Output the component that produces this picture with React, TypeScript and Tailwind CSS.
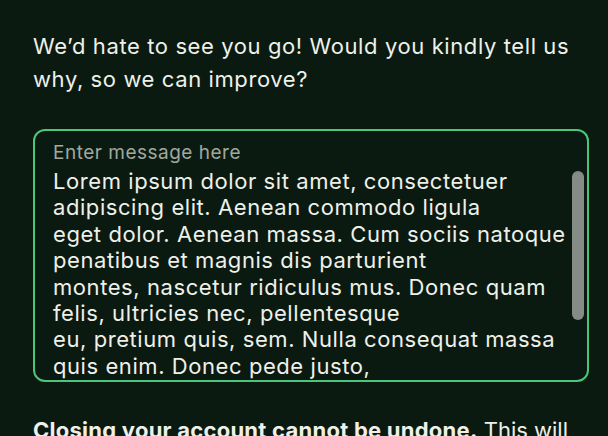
import React from 'react';

const lines = [
  'Lorem ipsum dolor sit amet, consectetuer',
  'adipiscing elit. Aenean commodo ligula',
  'eget dolor. Aenean massa. Cum sociis natoque',
  'penatibus et magnis dis parturient',
  'montes, nascetur ridiculus mus. Donec quam',
  'felis, ultricies nec, pellentesque',
  'eu, pretium quis, sem. Nulla consequat massa',
  'quis enim. Donec pede justo,',
  'fringilla vel, aliquet nec, vulputate eget,',
  'arcu. In enim justo, rhoncus ut, imperdiet a,',
];

const App = () => {
  return (
    <div
      className="h-screen overflow-hidden bg-[#0b1a10] px-[33px] pt-[30px] text-[#eef0ea]"
      style={{ fontFamily: 'Inter, "Liberation Sans", sans-serif' }}
    >
      <p className="w-[545px] text-[22px] leading-[33px] tracking-[0.6px]">
        We’d hate to see you go! Would you kindly tell us why, so we can improve?
      </p>

      {/* Message box */}
      <div className="relative mt-[33px] h-[253px] w-[556px] overflow-hidden rounded-[12px] border-2 border-[#4cc47a] pl-[18px] pr-[24px] pt-[10px]">
        <div className="text-[19px] leading-[24px] tracking-[0.5px] text-[#a0a89f]">
          Enter message here
        </div>
        <div className="mt-[3px] text-[22px] leading-[26.4px] tracking-[0.57px]">
          {lines.map((line) => (
            <div key={line} className="whitespace-nowrap">
              {line}
            </div>
          ))}
        </div>
        <div className="absolute right-[3px] top-[40px] h-[149px] w-[12px] rounded-full bg-[#858c85]" />
      </div>

      <p className="mt-[32px] w-[560px] text-[22px] leading-[33px]">
        <span className="font-bold tracking-[0.25px]">Closing your account cannot be undone.</span>{' '}
        This will permanently delete your data.
      </p>
    </div>
  );
};

export default App;
